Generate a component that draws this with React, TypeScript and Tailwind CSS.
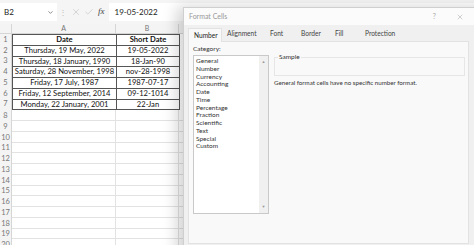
import { X, Check, ChevronDown } from 'lucide-react'

const rows = [
  ['Thursday, 19 May, 2022', '19-05-2022'],
  ['Thursday, 18 January, 1990', '18-Jan-90'],
  ['Saturday, 28 November, 1998', 'nov-28-1998'],
  ['Friday, 17 July, 1987', '1987-07-17'],
  ['Friday, 12 September, 2014', '09-12-1014'],
  ['Monday, 22 January, 2001', '22-Jan'],
]

const emptyRows = [8, 9, 10, 11, 12, 13, 14, 15, 16, 17, 18, 19, 20]

const categories = [
  'General',
  'Number',
  'Currency',
  'Accounting',
  'Date',
  'Time',
  'Percentage',
  'Fraction',
  'Scientific',
  'Text',
  'Special',
  'Custom',
]

const tabs = [
  { label: 'Number', w: 'w-[34px]' },
  { label: 'Alignment', w: 'w-[43px]' },
  { label: 'Font', w: 'w-[31px]' },
  { label: 'Border', w: 'w-[34px]' },
  { label: 'Fill', w: 'w-[30px]' },
  { label: 'Protection', w: 'w-[50px]' },
]

function Sheet() {
  return (
    <div className="flex flex-col w-full h-full bg-white font-['Lato',sans-serif]">
      {/* formula bar */}
      <div className="flex items-center h-[24px] bg-[#f5f5f5] shrink-0">
        <div className="flex items-center justify-between w-[57px] h-[18px] bg-white pl-[4px] pr-[3px] text-[8px] text-[#222]">
          <span>B2</span>
          <ChevronDown size={7} strokeWidth={2.5} className="text-[#666]" />
        </div>
        <div className="w-[12px] text-center text-[8px] leading-none text-[#bbb]">⋮</div>
        <X size={10} strokeWidth={1.2} className="ml-[2px] text-[#b5b5b5]" />
        <Check size={10} strokeWidth={1.2} className="ml-[3px] text-[#b5b5b5]" />
        <span className="ml-[4px] font-['Liberation_Serif',serif] italic text-[9px] text-[#444]">fx</span>
        <div className="ml-[4px] flex-1 h-[18px] bg-white flex items-center pl-[6px] text-[8px] text-[#222]">
          19-05-2022
        </div>
      </div>
      {/* column headers */}
      <div className="flex h-[10px] shrink-0 bg-[#f4f4f4] text-[7px] text-[#777] border-b border-[#d6d6d6]">
        <div className="w-[12px] border-r border-[#d6d6d6]" />
        <div className="w-[104px] flex items-center justify-center border-r border-[#d6d6d6]">A</div>
        <div className="w-[63px] flex items-center justify-center border-r border-[#d6d6d6]">B</div>
        <div className="flex-1" />
      </div>
      {/* data rows */}
      <div className="flex">
        <div className="w-[12px] shrink-0 bg-[#f4f4f4] border-r border-[#d6d6d6]">
          {[1, 2, 3, 4, 5, 6, 7].map((n) => (
            <div key={n} className="h-[10.75px] flex items-center justify-center text-[7.5px] text-[#777]">
              {n}
            </div>
          ))}
        </div>
        <div className="flex flex-col border-l border-t border-[#555] text-[7.6px] text-[#111] whitespace-nowrap">
          <div className="flex h-[10.75px] font-bold">
            <div className="w-[104px] flex items-center justify-center border-r border-b border-[#555]">Date</div>
            <div className="w-[63px] flex items-center justify-center border-r border-b border-[#555]">Short Date</div>
          </div>
          {rows.map(([a, b]) => (
            <div key={a} className="flex h-[10.75px]">
              <div className="w-[104px] flex items-center justify-center border-r border-b border-[#555]">{a}</div>
              <div className="w-[63px] flex items-center justify-center border-r border-b border-[#555]">{b}</div>
            </div>
          ))}
        </div>
        <div className="flex-1" />
      </div>
      {emptyRows.map((n) => (
        <div key={n} className="flex h-[10.75px] shrink-0">
          <div className="w-[12px] flex items-center justify-center bg-[#f4f4f4] border-r border-[#d6d6d6] text-[7.5px] text-[#777]">
            {n}
          </div>
          <div className="w-[104px] border-r border-b border-[#e2e2e2]" />
          <div className="w-[63px] border-r border-b border-[#e2e2e2]" />
          <div className="flex-1 border-b border-[#e2e2e2]" />
        </div>
      ))}
    </div>
  )
}

function FormatCells() {
  return (
    <div className="absolute left-[183px] top-[7px] w-[310px] h-[260px] bg-[#f0f0f0] border border-[#cfcfcf] shadow-[-6px_0_14px_rgba(0,0,0,0.18)] font-['Lato',sans-serif] text-[#333]">
      <div className="flex items-center h-[17px] bg-[#fbfbfb] pl-[5px] pr-[28px]">
        <span className="text-[7px] text-[#999]">Format Cells</span>
        <span className="ml-auto text-[7px] text-[#aaa]">?</span>
        <X size={8} strokeWidth={1} className="ml-[20px] text-[#777]" />
      </div>
      <div className="flex h-[15px] mt-[1px] ml-[4px] items-end">
        {tabs.map((t, i) => (
          <div
            key={t.label}
            className={`${t.w} h-[14px] flex items-center pl-[5px] text-[6.6px] ${
              i === 0 ? 'bg-[#f9f9f9] border-l border-t border-r border-[#e2e2e2] text-[#222] -mb-px relative z-10' : 'text-[#444]'
            }`}
          >
            {t.label}
          </div>
        ))}
      </div>
      <div className="ml-[4px] w-[281px] h-[203px] bg-[#f9f9f9] border border-[#e2e2e2] flex pl-[4px] pt-[2px]">
        <div className="flex flex-col w-[76px]">
          <span className="text-[6.5px] leading-[9px] text-[#333]">Category:</span>
          <div className="mt-[2px] flex h-[159px] bg-white border border-[#c9c9c9]">
            <div className="flex-1 flex flex-col pl-[2px] pt-[1px]">
              {categories.map((c) => (
                <span key={c} className="text-[6.5px] leading-[7.75px] text-[#333]">
                  {c}
                </span>
              ))}
            </div>
            <div className="w-[9px] bg-[#f0f0f0] flex flex-col items-center justify-between py-[3px] text-[4px] text-[#999]">
              <span>▲</span>
              <span>▼</span>
            </div>
          </div>
        </div>
        <div className="flex flex-col ml-[5px] w-[191px] pt-[13px]">
          <div className="relative h-[19px] border border-[#e6e6e6]">
            <span className="absolute left-[3px] -top-[5px] bg-[#f9f9f9] px-px text-[6.5px] leading-[8px] text-[#333]">Sample</span>
          </div>
          <p className="mt-[3px] text-[6.2px] leading-[8px] text-[#333] whitespace-nowrap">General format cells have no specific number format.</p>
        </div>
      </div>
    </div>
  )
}

export default function App() {
  return (
    <div className="relative w-[474px] h-[245px] overflow-hidden bg-white">
      <Sheet />
      <FormatCells />
    </div>
  )
}
